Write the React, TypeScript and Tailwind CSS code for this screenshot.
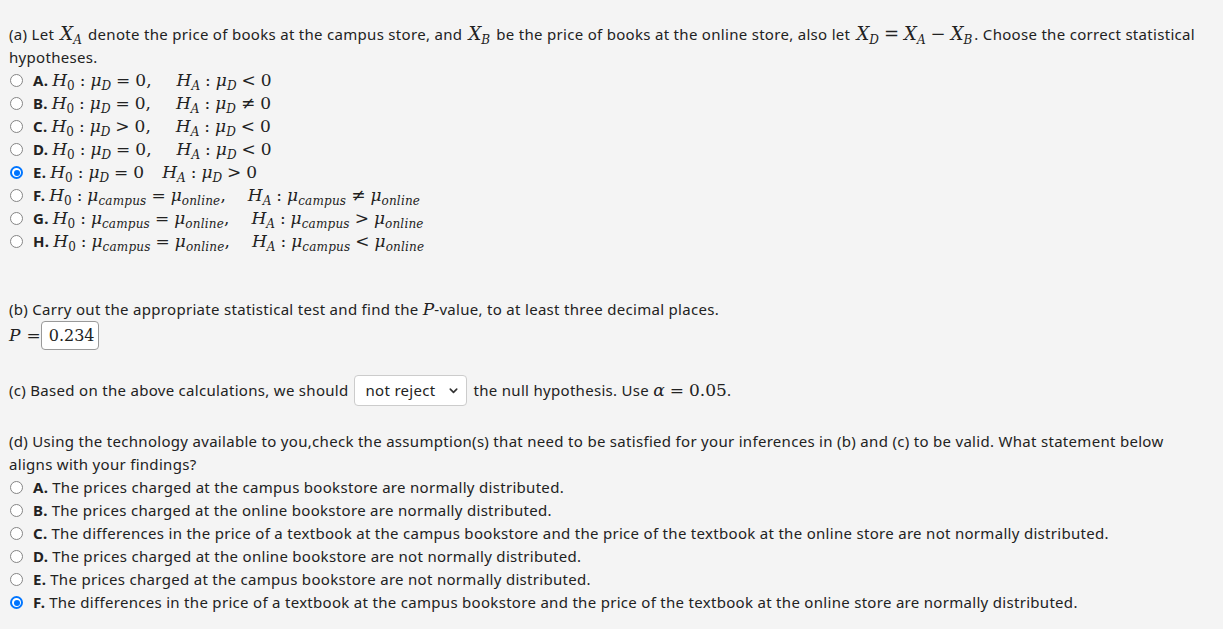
import React from 'react';

const Sub: React.FC<{ children: React.ReactNode; wide?: boolean }> = ({ children, wide }) => (
  <span className={`text-[12px] leading-none align-[-4px] ${wide ? 'tracking-[0.2px]' : ''}`}>{children}</span>
);

const M: React.FC<{ children: React.ReactNode; inline?: boolean }> = ({ children, inline }) => (
  <span
    className={`font-['DejaVu_Serif',serif] leading-none tracking-normal whitespace-nowrap ${
      inline ? 'text-[18px] mx-[2px]' : 'text-[17px]'
    }`}
  >
    {children}
  </span>
);

const I: React.FC<{ children: React.ReactNode }> = ({ children }) => <span className="italic">{children}</span>;

const Op: React.FC<{ children: React.ReactNode }> = ({ children }) => <span className="mx-[5px]">{children}</span>;

const Radio: React.FC<{ checked?: boolean }> = ({ checked }) => (
  <span className="inline-flex items-center justify-center w-[13px] h-[13px] mr-[10px] shrink-0">
    {checked ? (
      <span className="w-[13px] h-[13px] rounded-full border-2 border-[#0075ff] bg-white flex items-center justify-center">
        <span className="block w-[6px] h-[6px] rounded-full bg-[#0075ff]" />
      </span>
    ) : (
      <span className="w-[13px] h-[13px] rounded-full border border-[#858585] bg-white block" />
    )}
  </span>
);

const Row: React.FC<{ checked?: boolean; label: string; children: React.ReactNode }> = ({ checked, label, children }) => (
  <div className="flex items-center h-[23px] pl-[1px]">
    <Radio checked={checked} />
    <span className="font-bold mr-[4px]">{label}</span>
    <span>{children}</span>
  </div>
);

const H0 = () => (
  <>
    <I>H</I>
    <Sub>0</Sub>
    <Op>:</Op>
  </>
);
const HA = () => (
  <>
    <I>H</I>
    <Sub>
      <I>A</I>
    </Sub>
    <Op>:</Op>
  </>
);
const muD = (
  <>
    <I>μ</I>
    <Sub>
      <I>D</I>
    </Sub>
  </>
);
const muC = (
  <>
    <I>μ</I>
    <Sub wide>
      <I>campus</I>
    </Sub>
  </>
);
const muO = (
  <>
    <I>μ</I>
    <Sub wide>
      <I>online</I>
    </Sub>
  </>
);

const Gap: React.FC<{ w?: string }> = ({ w }) => <span className={w ?? 'ml-[25px]'} />;

export default function App() {
  return (
    <div className="min-h-[629px] bg-[#f4f4f4] text-[#222] font-['Noto_Sans','Open_Sans',sans-serif] text-[15px] leading-[23px] px-[9px] pt-[23px] tracking-[0.3px]">
      <div>
        (a) Let{' '}
        <M inline>
          <I>X</I>
          <Sub>
            <I>A</I>
          </Sub>
        </M>{' '}
        denote the price of books at the campus store, and{' '}
        <M inline>
          <I>X</I>
          <Sub>
            <I>B</I>
          </Sub>
        </M>{' '}
        be the price of books at the online store, also let{' '}
        <M inline>
          <I>X</I>
          <Sub>
            <I>D</I>
          </Sub>
          <Op>=</Op>
          <I>X</I>
          <Sub>
            <I>A</I>
          </Sub>
          <Op>−</Op>
          <I>X</I>
          <Sub>
            <I>B</I>
          </Sub>
        </M>
        . Choose the correct statistical hypotheses.
      </div>
      <Row label="A.">
        <M>
          <H0 />
          {muD}
          <Op>=</Op>0,
          <Gap />
          <HA />
          {muD}
          <Op>&lt;</Op>0
        </M>
      </Row>
      <Row label="B.">
        <M>
          <H0 />
          {muD}
          <Op>=</Op>0,
          <Gap />
          <HA />
          {muD}
          <Op>≠</Op>0
        </M>
      </Row>
      <Row label="C.">
        <M>
          <H0 />
          {muD}
          <Op>&gt;</Op>0,
          <Gap />
          <HA />
          {muD}
          <Op>&lt;</Op>0
        </M>
      </Row>
      <Row label="D.">
        <M>
          <H0 />
          {muD}
          <Op>=</Op>0,
          <Gap />
          <HA />
          {muD}
          <Op>&lt;</Op>0
        </M>
      </Row>
      <Row label="E." checked>
        <M>
          <H0 />
          {muD}
          <Op>=</Op>0
          <Gap w="ml-[18px]" />
          <HA />
          {muD}
          <Op>&gt;</Op>0
        </M>
      </Row>
      <Row label="F.">
        <M>
          <H0 />
          {muC}
          <Op>=</Op>
          {muO},
          <Gap w="ml-[22px]" />
          <HA />
          {muC}
          <Op>≠</Op>
          {muO}
        </M>
      </Row>
      <Row label="G.">
        <M>
          <H0 />
          {muC}
          <Op>=</Op>
          {muO},
          <Gap w="ml-[22px]" />
          <HA />
          {muC}
          <Op>&gt;</Op>
          {muO}
        </M>
      </Row>
      <Row label="H.">
        <M>
          <H0 />
          {muC}
          <Op>=</Op>
          {muO},
          <Gap w="ml-[22px]" />
          <HA />
          {muC}
          <Op>&lt;</Op>
          {muO}
        </M>
      </Row>

      <div className="mt-[45px]">
        (b) Carry out the appropriate statistical test and find the{' '}
        <M>
          <I>P</I>
        </M>
        -value, to at least three decimal places.
      </div>
      <div className="flex items-center h-[29px]">
        <M>
          <I>P</I>
          <span className="ml-[6px]">=</span>
        </M>
        <span className="h-[29px] w-[58px] border border-[#999] rounded-[4px] bg-white flex items-center pl-[7px] font-['DejaVu_Serif',serif] text-[16px] tracking-normal">
          0.234
        </span>
      </div>

      <div className="flex items-center mt-[25px] h-[31px]">
        <span>(c) Based on the above calculations, we should</span>
        <span className="ml-[5px] h-[31px] w-[113px] border border-[#ccc] rounded-[4px] bg-white flex items-center justify-between pl-[11px] pr-[7px]">
          <span>not reject</span>
          <svg width="11" height="11" viewBox="0 0 12 12" fill="none" stroke="#333" strokeWidth="1.8" strokeLinecap="round" strokeLinejoin="round">
            <path d="M2.5 4.5 L6 8 L9.5 4.5" />
          </svg>
        </span>
        <span className="ml-[7px]">
          the null hypothesis. Use{' '}
          <M>
            <I>α</I>
            <Op>=</Op>0.05
          </M>
          .
        </span>
      </div>

      <div className="mt-[24px]">
        (d) Using the technology available to you,check the assumption(s) that need to be satisfied for your inferences in (b) and (c) to be valid. What statement below
        <br />
        aligns with your findings?
      </div>
      <Row label="A.">The prices charged at the campus bookstore are normally distributed.</Row>
      <Row label="B.">The prices charged at the online bookstore are normally distributed.</Row>
      <Row label="C.">
        The differences in the price of a textbook at the campus bookstore and the price of the textbook at the online store are not normally distributed.
      </Row>
      <Row label="D.">The prices charged at the online bookstore are not normally distributed.</Row>
      <Row label="E.">The prices charged at the campus bookstore are not normally distributed.</Row>
      <Row label="F." checked>
        The differences in the price of a textbook at the campus bookstore and the price of the textbook at the online store are normally distributed.
      </Row>
    </div>
  );
}
